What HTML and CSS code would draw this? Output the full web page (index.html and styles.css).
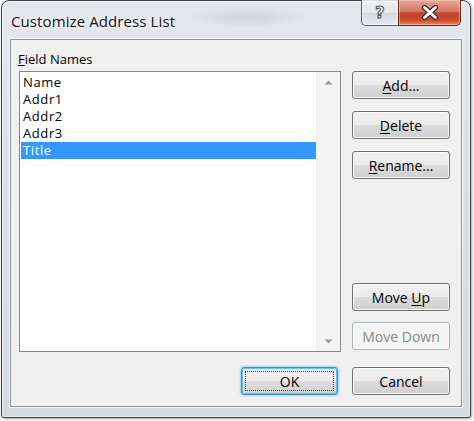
FILE: index.html
```html
<!DOCTYPE html>
<html>
<head>
<meta charset="utf-8">
<link rel="stylesheet" href="styles.css">
</head>
<body>
<div class="window">
  <div class="titlebar">
    <div class="title">Customize Address List</div>
    <div class="caption">
      <div class="cap-help"><span>?</span></div>
      <div class="cap-close">
        <svg width="22" height="15" viewBox="0 0 22 15">
          <path d="M5.5 2.5 L16.5 12.5 M16.5 2.5 L5.5 12.5" stroke="#3b2a26" stroke-width="5.4" stroke-linecap="round"/>
          <path d="M5.5 2.5 L16.5 12.5 M16.5 2.5 L5.5 12.5" stroke="#ffffff" stroke-width="3" stroke-linecap="round"/>
        </svg>
      </div>
    </div>
  </div>
  <div class="client">
    <div class="main">
      <div class="left">
        <div class="label"><u>F</u>ield Names</div>
        <div class="listbox">
          <ul class="items">
            <li>Name</li>
            <li>Addr1</li>
            <li>Addr2</li>
            <li>Addr3</li>
            <li class="selected">Title</li>
          </ul>
          <div class="scrollbar">
            <div class="arrow">
              <svg width="9" height="5" viewBox="0 0 9 5"><path d="M0.5 4.5 L4.5 0.5 L8.5 4.5 Z" fill="#9a9a9a"/></svg>
            </div>
            <div class="arrow">
              <svg width="9" height="5" viewBox="0 0 9 5"><path d="M0.5 0.5 L4.5 4.5 L8.5 0.5 Z" fill="#9a9a9a"/></svg>
            </div>
          </div>
        </div>
      </div>
      <div class="right">
        <div class="btn-group">
          <div class="btn"><span><u>A</u>dd...</span></div>
          <div class="btn"><span><u>D</u>elete</span></div>
          <div class="btn"><span><u>R</u>ename...</span></div>
        </div>
        <div class="btn-group tight">
          <div class="btn"><span>Move <u>U</u>p</span></div>
          <div class="btn disabled"><span>Move Down</span></div>
        </div>
      </div>
    </div>
    <div class="footer">
      <div class="btn default ok"><span>OK</span></div>
      <div class="btn"><span>Cancel</span></div>
    </div>
  </div>
</div>
</body>
</html>
```

FILE: styles.css
```css
html, body {
  margin: 0;
  padding: 0;
  background: #ffffff;
}

body {
  width: 474px;
  height: 421px;
  overflow: hidden;
  font-family: "Open Sans", "Noto Sans", "Liberation Sans", sans-serif;
}

.window {
  box-sizing: border-box;
  width: 470px;
  height: 418px;
  margin-left: 1px;
  border: 1px solid #3b4046;
  border-radius: 8px 8px 3px 3px;
  background:
    radial-gradient(ellipse 60px 10px at 245px 16px, rgba(120,125,130,0.18), rgba(120,125,130,0) 100%),
    linear-gradient(180deg, #e3e6ea 0%, #dde1e6 40%, #d5dae0 100%);
  box-shadow: inset 0 0 0 1px rgba(255,255,255,0.55), 1px 1px 3px rgba(0,0,0,0.35);
  padding: 0 8px 10px 8px;
  display: flex;
  flex-direction: column;
}

.titlebar {
  height: 38px;
  flex: none;
  display: flex;
  justify-content: space-between;
  align-items: flex-start;
}

.title {
  font-size: 15px;
  color: #111;
  padding-top: 10px;
  padding-left: 1px;
  letter-spacing: 0.1px;
  text-shadow: 0 0 6px #ffffff, 0 0 3px #ffffff;
}

.caption {
  display: flex;
  margin-right: 1px;
  margin-top: -1px;
}

.cap-help,
.cap-close {
  box-sizing: border-box;
  height: 26px;
  display: flex;
  align-items: center;
  justify-content: center;
  border: 1px solid #5a6068;
  border-top: none;
}

.cap-help {
  width: 37px;
  border-radius: 0 0 0 5px;
  border-right: none;
  background: linear-gradient(180deg, rgba(255,255,255,0.5), rgba(220,224,228,0.5) 50%, rgba(200,205,210,0.6) 51%, rgba(235,238,240,0.7));
  box-shadow: inset 0 0 0 1px rgba(255,255,255,0.6);
}

.cap-help span {
  font-family: "DejaVu Sans", sans-serif;
  font-weight: bold;
  font-size: 16px;
  color: #ffffff;
  -webkit-text-stroke: 1px #4a4f55;
  margin-top: -1px;
}

.cap-close {
  width: 63px;
  border-radius: 0 0 5px 0;
  border-color: #5b2a20;
  background: linear-gradient(180deg, #e9a899 0%, #d97862 45%, #c5412a 52%, #cc4b30 80%, #e08a6a 100%);
  box-shadow: inset 0 0 0 1px rgba(255,220,210,0.45);
}

.client {
  flex: 1;
  box-sizing: border-box;
  border: 1px solid #8c939b;
  box-shadow: 0 0 0 1px rgba(255,255,255,0.7);
  background: #f0f0f0;
  padding: 0 11px 0 8px;
  display: flex;
  flex-direction: column;
  font-size: 14px;
  color: #000;
}

.main {
  display: grid;
  grid-template-columns: 322px 98px;
  column-gap: 11px;
}

.left {
  display: flex;
  flex-direction: column;
}

.label {
  height: 31px;
  box-sizing: border-box;
  padding-top: 11px;
  line-height: 17px;
  margin-left: -1px;
  font-size: 13px;
}

.listbox {
  box-sizing: border-box;
  height: 281px;
  border: 1px solid #828790;
  background: #ffffff;
  display: flex;
}

.items {
  list-style: none;
  margin: 0;
  padding: 2px 0 0 1px;
  flex: 1;
  font-size: 13px;
  letter-spacing: 0.6px;
}

.items li {
  height: 17px;
  line-height: 17px;
  padding-left: 2px;
}

.items li.selected {
  background: #3399ff;
  color: #ffffff;
}

.scrollbar {
  width: 23px;
  background: #f3f3f3;
  border-left: 1px solid #ededed;
  display: flex;
  flex-direction: column;
  justify-content: space-between;
}

.arrow {
  height: 20px;
  display: flex;
  align-items: center;
  justify-content: center;
}

.right {
  padding-top: 31px;
  padding-bottom: 2px;
  display: flex;
  flex-direction: column;
  justify-content: space-between;
}

.btn-group {
  display: flex;
  flex-direction: column;
  gap: 12px;
}

.btn-group.tight {
  gap: 11px;
}

.btn {
  box-sizing: border-box;
  height: 28px;
  width: 98px;
  border: 1px solid #707070;
  border-radius: 3px;
  background: linear-gradient(180deg, #f2f2f2 0%, #ebebeb 50%, #dddddd 50%, #cfcfcf 100%);
  box-shadow: inset 0 0 0 1px #fbfbfb;
  display: flex;
  align-items: center;
  justify-content: center;
  line-height: 17px;
  color: #000;
}

.btn u {
  text-underline-offset: 2px;
}

.btn.disabled {
  border-color: #adb2b5;
  background: #f4f4f4;
  color: #8a8a8a;
}

.footer {
  margin-top: 15px;
  display: flex;
  justify-content: flex-end;
  gap: 14px;
}

.btn.ok {
  width: 97px;
}

.btn.default {
  position: relative;
  border-color: #3c8fc8;
  box-shadow: inset 0 0 0 1px #62c3ee, 0 0 2px 1px rgba(100,190,235,0.55);
}

.btn.default::after {
  content: "";
  position: absolute;
  inset: 3px;
  border: 1px dotted #444;
}
```
